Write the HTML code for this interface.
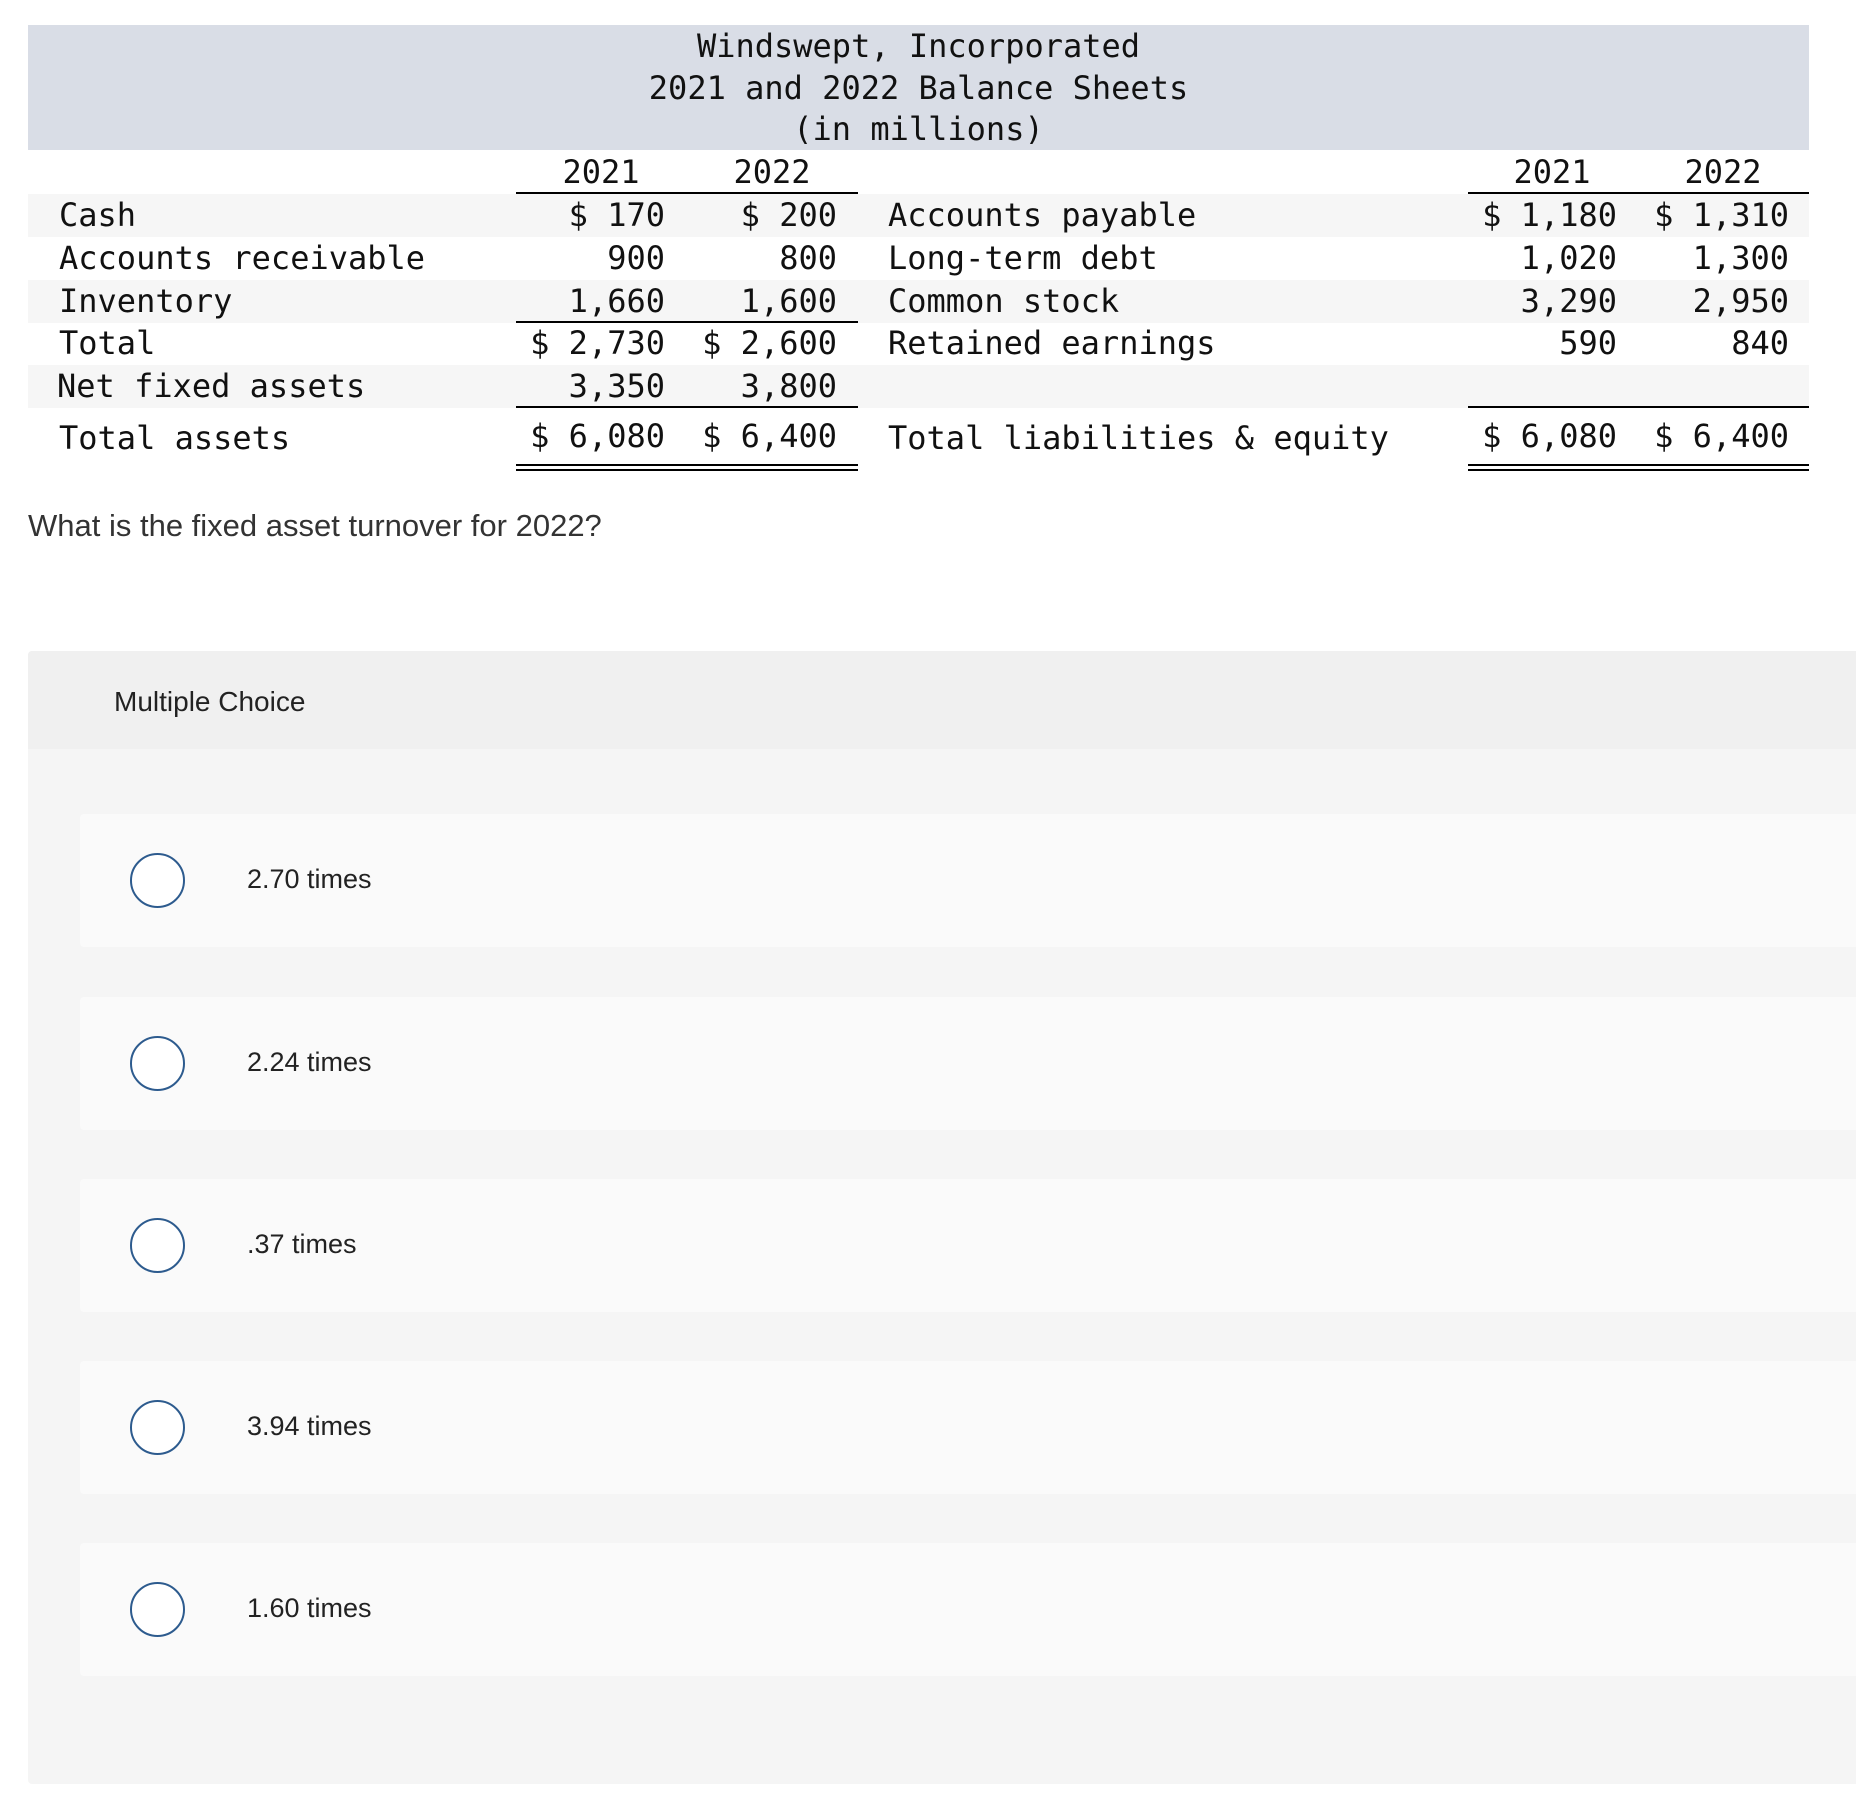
<!DOCTYPE html>
<html><head><meta charset="utf-8"><style>
body{margin:0;width:1856px;height:1806px;background:#fff;position:relative;overflow:hidden;font-family:"Liberation Sans",Arial,sans-serif}
.m{font-family:"DejaVu Sans Mono",monospace;font-size:32px;color:#111;position:absolute;white-space:pre;line-height:40px}
.b{position:absolute}
.r{text-align:right}
.c{text-align:center}
.opt{position:absolute;left:80px;width:1800px;height:133px;background:#fafafa;border-radius:4px}
.opt .ci{position:absolute;left:50px;top:39px;width:55px;height:55px;border:2px solid #2d5b8e;border-radius:50%;box-sizing:border-box;background:#fff}
.opt .t{position:absolute;left:167px;top:50px;font-size:27px;color:#222}
</style></head><body>
<div class="b" style="left:28px;top:25px;width:1781px;height:125px;background:#d9dde6"></div>
<div class="m c" style="left:28px;width:1781px;top:26px">Windswept, Incorporated</div>
<div class="m c" style="left:28px;width:1781px;top:68px">2021 and 2022 Balance Sheets</div>
<div class="m c" style="left:28px;width:1781px;top:109px">(in millions)</div>
<div class="b" style="left:28px;top:194px;width:1781px;height:43px;background:#f6f6f6"></div>
<div class="b" style="left:28px;top:280px;width:1781px;height:43px;background:#f6f6f6"></div>
<div class="b" style="left:28px;top:365px;width:1781px;height:43px;background:#f6f6f6"></div>
<div class="b" style="left:516px;top:192px;width:342px;height:2px;background:#000"></div>
<div class="b" style="left:1468px;top:192px;width:341px;height:2px;background:#000"></div>
<div class="b" style="left:516px;top:321px;width:342px;height:2px;background:#000"></div>
<div class="b" style="left:516px;top:406px;width:342px;height:2px;background:#000"></div>
<div class="b" style="left:1468px;top:406px;width:341px;height:2px;background:#000"></div>
<div class="b" style="left:516px;top:464px;width:342px;height:2px;background:#000"></div>
<div class="b" style="left:516px;top:469px;width:342px;height:2px;background:#000"></div>
<div class="b" style="left:1468px;top:464px;width:341px;height:2px;background:#000"></div>
<div class="b" style="left:1468px;top:469px;width:341px;height:2px;background:#000"></div>
<div class="m c" style="left:541px;width:120px;top:152px">2021</div>
<div class="m c" style="left:712px;width:120px;top:152px">2022</div>
<div class="m c" style="left:1492px;width:120px;top:152px">2021</div>
<div class="m c" style="left:1663px;width:120px;top:152px">2022</div>
<div class="m" style="left:59px;top:195px">Cash</div>
<div class="m" style="left:59px;top:238px">Accounts receivable</div>
<div class="m" style="left:59px;top:281px">Inventory</div>
<div class="m" style="left:59px;top:323px">Total</div>
<div class="m" style="left:57px;top:366px">Net fixed assets</div>
<div class="m" style="left:59px;top:418px">Total assets</div>
<div class="m r" style="left:465px;width:200px;top:195px">$ 170</div>
<div class="m r" style="left:637px;width:200px;top:195px">$ 200</div>
<div class="m r" style="left:465px;width:200px;top:238px">900</div>
<div class="m r" style="left:637px;width:200px;top:238px">800</div>
<div class="m r" style="left:465px;width:200px;top:281px">1,660</div>
<div class="m r" style="left:637px;width:200px;top:281px">1,600</div>
<div class="m r" style="left:465px;width:200px;top:323px">$ 2,730</div>
<div class="m r" style="left:637px;width:200px;top:323px">$ 2,600</div>
<div class="m r" style="left:465px;width:200px;top:366px">3,350</div>
<div class="m r" style="left:637px;width:200px;top:366px">3,800</div>
<div class="m r" style="left:465px;width:200px;top:416px">$ 6,080</div>
<div class="m r" style="left:637px;width:200px;top:416px">$ 6,400</div>
<div class="m" style="left:888px;top:195px">Accounts payable</div>
<div class="m" style="left:888px;top:238px">Long-term debt</div>
<div class="m" style="left:888px;top:281px">Common stock</div>
<div class="m" style="left:888px;top:323px">Retained earnings</div>
<div class="m" style="left:888px;top:418px">Total liabilities &amp; equity</div>
<div class="m r" style="left:1417px;width:200px;top:195px">$ 1,180</div>
<div class="m r" style="left:1589px;width:200px;top:195px">$ 1,310</div>
<div class="m r" style="left:1417px;width:200px;top:238px">1,020</div>
<div class="m r" style="left:1589px;width:200px;top:238px">1,300</div>
<div class="m r" style="left:1417px;width:200px;top:281px">3,290</div>
<div class="m r" style="left:1589px;width:200px;top:281px">2,950</div>
<div class="m r" style="left:1417px;width:200px;top:323px">590</div>
<div class="m r" style="left:1589px;width:200px;top:323px">840</div>
<div class="m r" style="left:1417px;width:200px;top:416px">$ 6,080</div>
<div class="m r" style="left:1589px;width:200px;top:416px">$ 6,400</div>

<div class="b" style="left:28px;top:508px;font-size:31px;color:#333">What is the fixed asset turnover for 2022?</div>

<div class="b" style="left:28px;top:651px;width:1850px;height:1133px;background:#f5f5f5;border-radius:4px"></div>
<div class="b" style="left:28px;top:651px;width:1850px;height:98px;background:#f0f0f0;border-radius:4px 0 0 0"></div>
<div class="b" style="left:114px;top:686px;font-size:28px;color:#222">Multiple Choice</div>

<div class="opt" style="top:814px"><div class="ci"></div><div class="t">2.70 times</div></div>
<div class="opt" style="top:997px"><div class="ci"></div><div class="t">2.24 times</div></div>
<div class="opt" style="top:1179px"><div class="ci"></div><div class="t">.37 times</div></div>
<div class="opt" style="top:1361px"><div class="ci"></div><div class="t">3.94 times</div></div>
<div class="opt" style="top:1543px"><div class="ci"></div><div class="t">1.60 times</div></div>
</body></html>
